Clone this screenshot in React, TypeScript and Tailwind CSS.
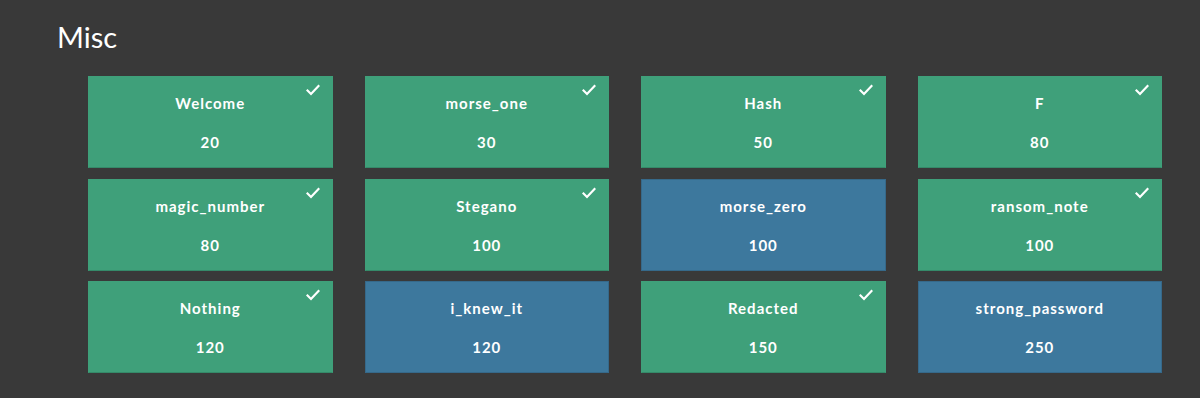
import React from "react";

type C = { name: string; pts: number; solved: boolean };
const cards: C[] = [
  { name: "Welcome", pts: 20, solved: true },
  { name: "morse_one", pts: 30, solved: true },
  { name: "Hash", pts: 50, solved: true },
  { name: "F", pts: 80, solved: true },
  { name: "magic_number", pts: 80, solved: true },
  { name: "Stegano", pts: 100, solved: true },
  { name: "morse_zero", pts: 100, solved: false },
  { name: "ransom_note", pts: 100, solved: true },
  { name: "Nothing", pts: 120, solved: true },
  { name: "i_knew_it", pts: 120, solved: false },
  { name: "Redacted", pts: 150, solved: true },
  { name: "strong_password", pts: 250, solved: false },
];

function Check() {
  return (
    <svg width="14" height="12" viewBox="0 0 14 12" className="absolute right-[12px] top-[7px]">
      <path d="M1.5 6.5 L5 10 L12.5 2" fill="none" stroke="white" strokeWidth="2.2" strokeLinecap="square" />
    </svg>
  );
}

export default function App() {
  return (
    <div className="w-[1200px] h-[398px] bg-[#393939] overflow-hidden" style={{ fontFamily: "Lato, 'Open Sans', sans-serif" }}>
      <h1 className="pl-[57px] pt-[18px] text-[29px] leading-[38px] text-white font-normal">Misc</h1>
      <div className="ml-[88px] mt-[20px] w-[1074px] grid grid-cols-4 gap-x-[32px] gap-y-[10.5px]">
        {cards.map((c) => (
          <div
            key={c.name}
            className={`relative h-[92px] flex flex-col items-center text-white font-bold text-[15px] tracking-[1px] border ${
              c.solved ? "bg-[#3fa07a] border-[#3fa07a] border-b-[#358a69]" : "bg-[#3d789d] border-[#36698a]"
            }`}
          >
            <div className="mt-[15px] leading-[22px]">{c.name}</div>
            <div className="mt-[17px] leading-[22px]">{c.pts}</div>
            {c.solved && <Check />}
          </div>
        ))}
      </div>
    </div>
  );
}
